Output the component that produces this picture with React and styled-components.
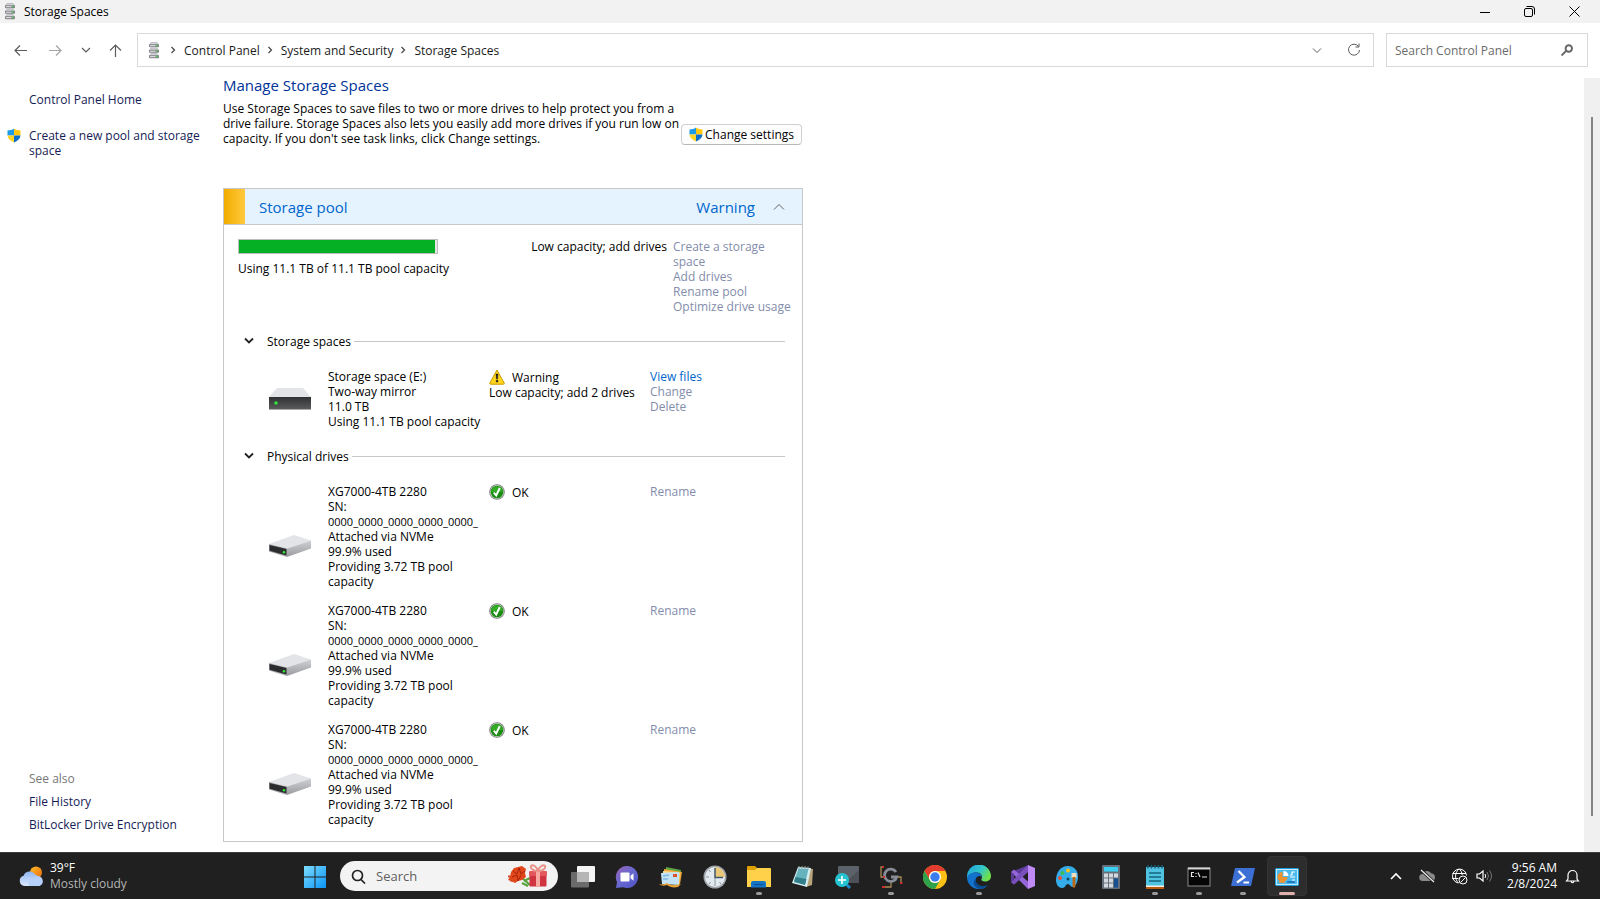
import React, { useState } from 'react';
import styled, { createGlobalStyle, css } from 'styled-components';

const GlobalStyle = createGlobalStyle`
  * {
    box-sizing: border-box;
  }
  body {
    margin: 0;
    background: #fff;
    color: #000;
    font-family: 'Open Sans', 'Noto Sans', sans-serif;
    font-size: 12px;
    line-height: 15px;
  }
  button,
  input {
    font: inherit;
    color: inherit;
  }
  svg {
    display: block;
    flex: none;
  }
`;

const Window = styled.div`
  display: flex;
  flex-direction: column;
  height: 100vh;
  overflow: hidden;
`;

/* title bar */
const TitleBar = styled.header`
  display: flex;
  align-items: center;
  gap: 8px;
  flex: none;
  height: 23px;
  padding-left: 4px;
  background: #f2f2f2;
`;
const WindowTitle = styled.span`
  flex: 1;
`;
const Captions = styled.div`
  display: flex;
  padding-right: 3px;
`;
const CaptionButton = styled.button`
  display: flex;
  align-items: center;
  justify-content: center;
  width: 45px;
  height: 20px;
  padding: 0;
  border: 0;
  background: none;
`;

/* address bar */
const NavBar = styled.nav`
  display: flex;
  align-items: center;
  flex: none;
  padding: 10px 12px 11px 4px;
`;
const NavButton = styled.button`
  display: flex;
  align-items: center;
  justify-content: center;
  width: ${(props) => props.$width || 32}px;
  height: 28px;
  padding: 0;
  border: 0;
  background: none;
  color: ${(props) => (props.$dim ? '#a5a5a5' : '#5c5c5c')};
`;
const AddressBox = styled.div`
  display: flex;
  align-items: center;
  flex: 1;
  height: 34px;
  margin: 0 12px 0 5px;
  padding: 0 1px 0 10px;
  border: 1px solid #d9d9d9;
`;
const Crumbs = styled.ol`
  display: flex;
  align-items: center;
  flex: 1;
  margin: 0;
  padding: 0 0 0 10px;
  list-style: none;
`;
const Crumb = styled.li`
  display: flex;
  align-items: center;
  gap: 8px;
  margin-right: 7px;
  color: #1a1a1a;
`;
const CrumbLink = styled.a`
  color: inherit;
  text-decoration: none;
`;
const SearchBox = styled.label`
  display: flex;
  align-items: center;
  width: 202px;
  height: 34px;
  padding: 0 14px 0 8px;
  border: 1px solid #d9d9d9;
`;
const SearchInput = styled.input`
  flex: 1;
  min-width: 0;
  padding: 0;
  border: 0;
  outline: 0;
  background: none;
  &::placeholder {
    color: #6b6b6b;
    opacity: 1;
  }
`;

/* page */
const Page = styled.div`
  display: flex;
  flex: 1;
  min-height: 0;
`;
const Sidebar = styled.aside`
  display: flex;
  flex-direction: column;
  flex: none;
  width: 223px;
  padding: 14px 20px 20px 7px;
`;
const SideLink = styled.a`
  display: flex;
  gap: 8px;
  margin-bottom: ${(props) => (props.$wide ? 21 : 0)}px;
  padding-left: ${(props) => (props.$icon ? 0 : 22)}px;
  color: #151c55;
  text-decoration: none;
`;
const SeeAlso = styled.div`
  display: flex;
  flex-direction: column;
  gap: 8px;
  margin-top: auto;
`;
const SeeAlsoTitle = styled.span`
  padding-left: 22px;
  color: #777;
`;
const Main = styled.main`
  flex: 1;
  min-width: 0;
`;
const ScrollTrack = styled.div`
  display: flex;
  justify-content: center;
  flex: none;
  width: 16px;
  padding: 39px 0 36px;
  background: #f0f0f0;
`;
const ScrollThumb = styled.div`
  width: 2px;
  background: #858585;
`;
const Content = styled.div`
  max-width: 580px;
`;
const Heading = styled.h1`
  margin: 0 0 9px;
  color: #003399;
  font-size: 15px;
  font-weight: 400;
  line-height: 14px;
`;
const Intro = styled.div`
  display: flex;
  align-items: flex-end;
  justify-content: space-between;
  margin-bottom: 41px;
`;
const IntroText = styled.p`
  flex: 1;
  margin: 0 0 1px;
`;
const SettingsButton = styled.button`
  display: flex;
  align-items: center;
  justify-content: center;
  gap: 2px;
  height: 21px;
  margin: 0 1px 2px 0;
  padding: 0 7px;
  border: 1px solid #d0d0d0;
  border-bottom-color: #b8b8b8;
  border-radius: 4px;
  background: #fdfdfd;
  white-space: nowrap;
`;

/* pool card */
const Pool = styled.section`
  border: 1px solid #c8c8c8;
`;
const PoolHeader = styled.header`
  display: flex;
  align-items: center;
  height: 36px;
  border-bottom: 1px solid #c8c8c8;
  background: #e5f3ff;
  color: #0066cc;
  font-size: 15px;
  line-height: 20px;
`;
const PoolFlag = styled.span`
  align-self: stretch;
  width: 21px;
  margin-right: 14px;
  background: linear-gradient(90deg, #f2ad00, #ffc83d);
`;
const PoolName = styled.h2`
  flex: 1;
  margin: 0;
  font-size: inherit;
  font-weight: 400;
`;
const CollapseButton = styled.button`
  display: flex;
  align-items: center;
  justify-content: center;
  width: 47px;
  height: 30px;
  padding: 0;
  border: 0;
  background: none;
`;
const PoolBody = styled.div`
  padding: 14px 17px 14px 14px;
`;
const Summary = styled.div`
  display: grid;
  grid-template-columns: 200px 1fr 121px;
  column-gap: 6px;
  margin-right: -9px;
`;
const Usage = styled.div`
  white-space: nowrap;
`;
const SummaryStatus = styled.span`
  text-align: right;
`;
const Meter = styled.div`
  height: 15px;
  margin-bottom: 7px;
  border: 1px solid #bcbcbc;
  background: #e6e6e6;
`;
const MeterFill = styled.div`
  width: 99%;
  height: 100%;
  background: #06b025;
`;
const Tasks = styled.div`
  display: flex;
  flex-direction: column;
  align-items: flex-start;
`;
const TaskLink = styled.a`
  color: ${(props) => (props.$off ? '#838dab' : '#0066cc')};
  text-decoration: none;
`;

const GroupHeader = styled.button`
  display: flex;
  align-items: center;
  width: 100%;
  height: 16px;
  margin: 19px 0 20px;
  padding: 0 0 0 6px;
  border: 0;
  background: none;
  &::after {
    content: '';
    flex: 1;
    height: 1px;
    margin-left: 3px;
    background: #c8c8c8;
  }
`;
const GroupName = styled.span`
  margin-left: 13px;
`;
const Items = styled.ul`
  display: flex;
  flex-direction: column;
  gap: 14px;
  margin: 0;
  padding: 0 0 0 31px;
  list-style: none;
`;
const Item = styled.li`
  display: grid;
  grid-template-columns: 59px 161px 161px 1fr;
`;
const ItemIcon = styled.div`
  align-self: center;
  ${(props) =>
    props.$low &&
    css`
      padding-top: 18px;
    `}
`;
const Details = styled.div`
  margin-right: 4px;
`;
const Serial = styled.div`
  font-size: 11px;
`;
const Status = styled.div`
  white-space: nowrap;
`;
const StatusLine = styled.div`
  display: flex;
  align-items: center;
  gap: 7px;
  height: 16px;
`;

/* taskbar */
const Taskbar = styled.footer`
  display: grid;
  grid-template-columns: 1fr auto 1fr;
  align-items: center;
  flex: none;
  height: 47px;
  border-top: 1px solid #3c3c3c;
  background: #202020;
  color: #fff;
  line-height: 16px;
`;
const Weather = styled.button`
  display: flex;
  align-items: center;
  gap: 7px;
  padding: 0 0 0 19px;
  border: 0;
  background: none;
  text-align: left;
`;
const WeatherText = styled.span`
  color: #b4b4b4;
`;
const Temp = styled.span`
  display: block;
  color: #fff;
`;
const Apps = styled.div`
  display: flex;
  align-items: center;
  padding-left: 2px;
`;
const AppButton = styled.button`
  display: flex;
  flex-direction: column;
  align-items: center;
  width: 40px;
  height: 40px;
  margin: 0 2px;
  padding: 8px 0 0;
  border: 1px solid ${(props) => (props.$active ? '#343434' : 'transparent')};
  border-radius: 4px;
  background: ${(props) => (props.$active ? '#2d2d2d' : 'none')};
  &::after {
    content: '';
    width: ${(props) => (props.$active ? 16 : 6)}px;
    height: 3px;
    margin-top: 3px;
    border-radius: 2px;
    background: ${(props) =>
      props.$active ? '#e0b0ad' : props.$running ? '#9a9a9a' : 'transparent'};
  }
`;
const TaskSearch = styled.label`
  display: flex;
  align-items: center;
  width: 218px;
  height: 30px;
  margin: 0 3px;
  padding: 0 10px 0 11px;
  border-radius: 15px;
  background: #f3f3f3;
  font-size: 13px;
`;
const TaskSearchInput = styled(SearchInput)`
  margin-left: 10px;
  &::placeholder {
    color: #5f5f5f;
  }
`;
const Tray = styled.div`
  display: flex;
  align-items: center;
  justify-content: flex-end;
  padding-right: 20px;
`;
const TrayButton = styled.button`
  display: flex;
  align-items: center;
  gap: 8px;
  margin-left: ${(props) => props.$gap}px;
  padding: 0;
  border: 0;
  background: none;
  text-align: right;
`;

/* ---------- icons ---------- */

const Glyph = ({ d, size = 12, width = 1, color = 'currentColor', h }) => (
  <svg
    width={size}
    height={h || size}
    viewBox={`0 0 ${size} ${h || size}`}
    fill="none"
    stroke={color}
    strokeWidth={width}
  >
    <path d={d} />
  </svg>
);

const DisksIcon = () => (
  <svg width="12" height="17" viewBox="0 0 12 17">
    {[0, 5.5, 11].map((y) => (
      <g key={y} transform={`translate(0 ${y})`}>
        <path d="M3 .5h6L10.800 3H1.200z" fill="#d4d5d8" stroke="#97989d" strokeWidth=".5" />
        <rect x="1" y="2.200" width="10" height="3" rx="1" fill="#808187" />
        <rect x="2" y="3.200" width="5.500" height="1" fill="#eceded" />
        <rect x="8" y="2.800" width="1.500" height="1.400" fill="#4fd34a" />
      </g>
    ))}
  </svg>
);

const Shield = () => (
  <svg width="14" height="15" viewBox="0 0 14 15">
    <path d="M7 .5C5 2 3 2.400.5 2.500V7.500H7z" fill="#1c9be8" />
    <path d="M7 .5C9 2 11 2.400 13.500 2.500V7.500H7z" fill="#ffc70f" />
    <path d="M.5 7.500C.9 11 3.500 13.200 7 14.500V7.500z" fill="#ffd52b" />
    <path d="M13.500 7.500C13.100 11 10.500 13.200 7 14.500V7.500z" fill="#0d6fc9" />
  </svg>
);

const SpaceIcon = () => (
  <svg width="42" height="24" viewBox="0 0 42 24">
    <defs>
      <linearGradient id="spaceFront" x1="0" y1="0" x2="0" y2="1">
        <stop offset="0" stopColor="#2f3032" />
        <stop offset="1" stopColor="#5b5c5e" />
      </linearGradient>
    </defs>
    <path d="M8 1h26l8 9H0z" fill="#e3e4e7" />
    <rect y="10" width="42" height="12.500" fill="url(#spaceFront)" />
    <path d="M0 22.500h42" stroke="#a9aaad" />
    <circle cx="7" cy="16" r="1.800" fill="#2fe636" />
  </svg>
);

const DriveIcon = () => (
  <svg width="42" height="24" viewBox="0 0 42 24">
    <defs>
      <linearGradient id="driveSide" x1="0" y1="0" x2="0" y2="1">
        <stop offset="0" stopColor="#cfd0d4" />
        <stop offset="1" stopColor="#9b9ca0" />
      </linearGradient>
    </defs>
    <path d="M0 10 25 1l17 5.500-24 8z" fill="#e3e4e7" />
    <path d="M18 14.500 42 6.500v8L18 23z" fill="url(#driveSide)" />
    <path d="M0 10 18 14.500V23L0 17.500z" fill="#a5a6aa" />
    <path d="M.5 11 17.500 15v6.500L.5 16.800z" fill="#2b2c2e" />
    <circle cx="15" cy="18.300" r="1.300" fill="#2fe636" />
  </svg>
);

const WarningIcon = () => (
  <svg width="16" height="16" viewBox="0 0 16 16">
    <path
      d="M8 1 15.300 14.200Q15.400 15.200 14.500 15.200H1.500Q.6 15.200.7 14.200z"
      fill="#ffd51f"
      stroke="#c79a00"
    />
    <path d="M7 5h2l-.4 5H7.400zM7.200 11.200h1.700v1.800H7.200z" fill="#1a1a1a" stroke="#1a1a1a" strokeWidth=".4" />
  </svg>
);

const OkIcon = () => (
  <svg width="16" height="16" viewBox="0 0 16 16">
    <circle cx="8" cy="8" r="7.800" fill="#777d77" />
    <circle cx="8" cy="8" r="7" fill="#c9d0c9" />
    <circle cx="8" cy="8" r="6.300" fill="#1a8c12" />
    <path d="M2.200 8a5.800 5.800 0 0 1 11.600 0z" fill="#33ab27" />
    <path d="M4.800 8.600 7.200 11.500 10.800 4" fill="none" stroke="#fff" strokeWidth="1.900" />
  </svg>
);

const WeatherIcon = () => (
  <svg width="24" height="21" viewBox="0 0 24 21">
    <defs>
      <linearGradient id="sun" x1="0" y1="0" x2="1" y2="1">
        <stop offset="0" stopColor="#f9bd2b" />
        <stop offset="1" stopColor="#ee6c0c" />
      </linearGradient>
      <linearGradient id="cloud" x1="0" y1="0" x2="0" y2="1">
        <stop offset="0" stopColor="#8fb6f2" />
        <stop offset="1" stopColor="#dbe9ff" />
      </linearGradient>
    </defs>
    <circle cx="17" cy="6.500" r="6" fill="url(#sun)" />
    <path
      d="M5.500 20A5.200 5.200 0 0 1 4.600 9.800 6.300 6.300 0 0 1 16 8.500a5 5 0 0 1 2.500 1.500A5 5 0 0 1 19 20z"
      fill="url(#cloud)"
    />
    <path d="M10 20a5 5 0 0 1 4.500-7 5 5 0 0 1 8.500 1.500A3.800 3.800 0 0 1 20 20z" fill="#b5d0fb" />
  </svg>
);

const GiftIcon = () => (
  <svg width="40" height="24" viewBox="0 0 40 24">
    <path d="M13 13 22 21M16 17l6-3M14 19l6 3" stroke="#59a33c" strokeWidth="2.200" />
    <path d="m3 8 3-4 4-1 4-1 4 3-1 4 1 4-4 3-4 1-3 2-4-2-3-1 2-3z" fill="#e2471c" />
    <path d="m5 7 4 3 2-6 2 6 4-3M4 13l5-2 1 6 3-6" stroke="#a72508" fill="none" />
    <path d="M0 12.500h3M2 16.500h3" stroke="#d94723" strokeWidth="2" />
    <rect x="21.500" y="8" width="17" height="14.500" rx="1" fill="#cf3440" />
    <rect x="21" y="7" width="18" height="5" rx="1" fill="#e2575c" />
    <path d="M28 7h4v15.500h-4z" fill="#f6aaa2" />
    <path d="M30 7C26 7 22 5 23 2c2-2 6 1 7 5 1-4 5-7 7-5 1 3-3 5-7 5z" fill="none" stroke="#e89389" strokeWidth="2" />
  </svg>
);

const App24 = ({ children }) => (
  <svg width="24" height="24" viewBox="0 0 24 24">
    {children}
  </svg>
);

const icons = {
  start: (
    <App24>
      <defs>
        <linearGradient id="win" x1="0" y1="0" x2="1" y2="1">
          <stop offset="0" stopColor="#7ddcff" />
          <stop offset="1" stopColor="#0a94f5" />
        </linearGradient>
      </defs>
      <path d="M1 1h10.500v10.500H1zM12.500 1H23v10.500H12.500zM1 12.500h10.500V23H1zM12.500 12.500H23V23H12.500z" fill="url(#win)" />
    </App24>
  ),
  taskView: (
    <App24>
      <rect x="6" y="1" width="18" height="16" rx="1" fill="#f4f4f4" />
      <rect x="0" y="7" width="18" height="15.500" rx="1" fill="#6b6b6b" />
      <path d="M6 7h12v10H6z" fill="#b5b5b5" />
    </App24>
  ),
  chat: (
    <App24>
      <defs>
        <linearGradient id="chat" x1="0" y1="0" x2="1" y2="1">
          <stop offset="0" stopColor="#9a62b4" />
          <stop offset=".5" stopColor="#6669d2" />
          <stop offset="1" stopColor="#4c4fc0" />
        </linearGradient>
      </defs>
      <path d="M12 1a11 11 0 1 1-4 21.200L1 23l1-6A11 11 0 0 1 12 1z" fill="url(#chat)" />
      <rect x="5.500" y="7.500" width="9" height="9" rx="1" fill="#fff" />
      <path d="m15.500 10.800 3-2.600v7.600l-3-2.600z" fill="#fff" />
    </App24>
  ),
  mail: (
    <App24>
      <path d="m7 2 15 3-2 12-14-3z" fill="#5aa744" />
      <path d="m5 4 18 3-2 12-16-2z" fill="#f0a73c" />
      <path d="m4 6 17 1.500-1 12L4 18z" fill="#f8dd94" />
      <path d="m2 8 18-1v13L3 19z" fill="#c4e3f7" />
      <path d="m4 11 6-1M4 14h5" fill="none" stroke="#7dbbe2" strokeWidth="1.500" />
      <rect x="14" y="9" width="4" height="3" fill="#d9542f" />
      <path d="M0 19c3 1 6 0 8-1 4 3 9 2 14 1l-3 3c-5 1-8 0-11-2-3 1-6 1-8-1z" fill="#e7a33a" />
    </App24>
  ),
  clock: (
    <App24>
      <circle cx="12" cy="12" r="11.500" fill="#9fa4aa" />
      <circle cx="12" cy="12" r="10" fill="#e2e9ef" />
      <path d="M12 12V2a10 10 0 0 1 10 10z" fill="#e8c878" />
      <path d="M12 3v9.500h8" fill="none" stroke="#40566b" strokeWidth="1.500" />
      <path d="M12 13v8M3 12h3M6 5l1.500 2M6 19l1.500-2M18 19l-1.500-2" stroke="#8898a8" />
    </App24>
  ),
  explorer: (
    <App24>
      <path d="M0 2q0-1 1-1h7l2 2v4H0z" fill="#e0a100" />
      <path d="M0 5h8l2-2h13q1 0 1 1v18H0z" fill="#ffd04a" />
      <path d="M4 22.500V18q0-2 2-2h11q2 0 2 2v4.500z" fill="#1573c4" />
      <path d="M7 19h9v1H7z" fill="#0b4d91" />
    </App24>
  ),
  notebook: (
    <App24>
      <path d="m8 3 14 1-1 16-6 2z" fill="#b8a57c" />
      <path d="M7 2 20 3l-4 19L1 18z" fill="#d5eef2" />
      <path d="m7.500 3.500 10 .5-3.500 15L3 16z" fill="#67b3bd" />
      <path d="m4.500 12 11 2-1.500 6-11-3z" fill="#327e8b" />
      <path d="M8 1v3M11 1v3M14 1v3M17 1.500v3" stroke="#9aa" />
    </App24>
  ),
  magnify: (
    <App24>
      <rect x="3" y="1" width="21" height="17" rx="1" fill="#5c6269" />
      <path d="M10 18 24 5v13z" fill="#4c5258" />
      <path d="m11 19 4 4" stroke="#1986c8" strokeWidth="3" />
      <circle cx="7" cy="15" r="7" fill="#25c3d2" />
      <path d="M7 11v8M3 15h8" stroke="#fff" strokeWidth="1.600" />
    </App24>
  ),
  gadget: (
    <App24>
      <path d="M4 2H2v10h3M12 18v4H5M18 12h4v6" fill="none" stroke="#a78a55" strokeWidth="1.300" />
      <path d="M17 7a6.200 6.200 0 1 0 .7 5H12" fill="none" stroke="#878c96" strokeWidth="2.800" />
      <path d="M3 1h2v2H3zM4 11h2v2H4zM3 21h3v2H3zM21 17h2.500v2H21z" fill="#cf2e2e" />
    </App24>
  ),
  chrome: (
    <App24>
      <circle cx="12" cy="12" r="12" fill="#fbc116" />
      <path d="M1.600 6A12 12 0 0 1 22.400 6H12a6 6 0 0 0-5.200 9z" fill="#e33b2e" />
      <path d="M1.600 6A12 12 0 0 0 12 24l5.200-9a6 6 0 0 1-10.400 0z" fill="#2da14c" />
      <circle cx="12" cy="12" r="6" fill="#fff" />
      <circle cx="12" cy="12" r="4.700" fill="#3b7ded" />
    </App24>
  ),
  edge: (
    <App24>
      <defs>
        <linearGradient id="edgeTop" x1="0" y1="0" x2="1" y2=".5">
          <stop offset="0" stopColor="#1f9fe0" />
          <stop offset=".6" stopColor="#33c6c8" />
          <stop offset="1" stopColor="#6ee04a" />
        </linearGradient>
      </defs>
      <path d="M0 12A12 12 0 0 1 24 11c0 4-3 5.500-6 5.500-2.500 0-4-1-3.500-2.500C16 11 14 7.500 9 7.500 4.500 7.500 1 10 0 14z" fill="url(#edgeTop)" />
      <path d="M0 13C.5 9.500 4.500 7.500 8.500 7.500c3 0 6 1.700 6.500 4.500-2-2-6-1-6.500 3C8 20 13 24 20 21A12 12 0 0 1 0 13z" fill="#1373cc" />
      <path d="M8.600 13.500C8 18 12 21.500 17 21c2 0 3.500-1 4.700-2A12 12 0 0 1 13 24C7 23 5 17 8.600 13.500z" fill="#0b4d94" />
    </App24>
  ),
  studio: (
    <App24>
      <path d="M0 7v10l3 2.500L17.500 6V0z" fill="#5c3a97" />
      <path d="m3 9 3.500 3L3 15z" fill="#202020" />
      <path d="m3 4.500 14 12V24L0 7z" fill="#9566d8" />
      <path d="m17 0 7 3v18l-7 3z" fill="#c08bf7" />
      <path d="m0 17 17-17v7L3 19.500z" fill="#7b50bd" />
      <path d="M0 7v10l3-2V9z" fill="#5c3a97" />
    </App24>
  ),
  paint: (
    <App24>
      <path d="M13 1C5 1 1 8 1 15c0 5 3 8 6 8 4 0 3-4 6-4 2 0 2 3 5 3 3-1 5-6 5-10 0-7-4-11-10-11z" fill="#33aeea" />
      <circle cx="13" cy="5.500" r="2" fill="#fbc116" />
      <circle cx="7.500" cy="8" r="2" fill="#3fbf4d" />
      <circle cx="5" cy="13" r="2" fill="#e7502e" />
      <circle cx="13" cy="14" r="1.500" fill="#14485f" />
      <path d="M16.500 8h5v5h-5z" fill="#efdcc0" />
      <path d="M17.500 12h3v9q-1.500 4-3 0z" fill="#b9691a" />
    </App24>
  ),
  calc: (
    <App24>
      <rect x="3" width="18" height="24" rx="1" fill="#66707c" />
      <rect x="5" y="2" width="14" height="4.500" fill="#3bd0f2" />
      <path d="M5 8.500h4v4H5zM10 8.500h4v4h-4zM15 8.500h4v4h-4zM5 13.500h4v4H5zM10 13.500h4v4h-4zM5 18.500h4v4H5zM10 18.500h4v4h-4z" fill="#d3d9df" />
      <path d="M15 13.500h4v9h-4z" fill="#174f93" />
    </App24>
  ),
  notepad: (
    <App24>
      <path d="M3 20h18v4H3z" fill="#b8590c" />
      <path d="M3 20h18v2H3z" fill="#f3f0ea" />
      <path d="M3 2h18v18.500H3z" fill="#50c3e0" />
      <path d="M5 0v3.500M8.500 0v3.500M12 0v3.500M15.500 0v3.500M19 0v3.500" stroke="#155d78" strokeWidth="1.500" />
      <path d="M6 8h12M6 12h12M6 16h12" stroke="#12667f" strokeWidth="1.600" />
    </App24>
  ),
  console: (
    <App24>
      <rect x="1" y="3" width="22" height="18" fill="#050505" stroke="#8d8d8d" />
      <path d="M1 2.500h22v2H1z" fill="#d5d5d5" />
      <path d="M7 7.500H4.500v4H7M9 8v1M9 11v1M11 7.500l2 4.500M15 12h5" fill="none" stroke="#e4e4e4" strokeWidth="1.200" />
    </App24>
  ),
  powershell: (
    <App24>
      <path d="M4 3h20l-4 18H0z" fill="#3c70d4" />
      <path d="m7.500 6 6 6-7.500 5.500M12.500 17.500H18" fill="none" stroke="#fff" strokeWidth="2.200" />
    </App24>
  ),
  control: (
    <App24>
      <rect x=".5" y="3.500" width="23" height="17" rx="1" fill="#c5ecfb" stroke="#1c9fe0" />
      <path d="M2 5h20v14H2z" fill="#4cb9ee" />
      <path d="M7.500 7v5h5a5 5 0 1 1-5-5z" fill="#f0932b" />
      <path d="M8.500 6a5 5 0 0 1 5 5h-5z" fill="#fff" />
      <path d="M15 10h2V7h3M15 12h5M17 15h3" fill="none" stroke="#fff" strokeWidth="1.200" />
      <path d="M4 17h6" stroke="#f0932b" strokeWidth="1.500" />
      <path d="M12 17h8" stroke="#1269b0" strokeWidth="1.500" />
    </App24>
  ),
};

const apps = [
  { name: 'Task view', icon: 'taskView' },
  { name: 'Chat', icon: 'chat' },
  { name: 'Mail', icon: 'mail' },
  { name: 'Clock', icon: 'clock' },
  { name: 'File Explorer', icon: 'explorer', running: true },
  { name: 'Notebook', icon: 'notebook' },
  { name: 'Magnify', icon: 'magnify' },
  { name: 'Gadget', icon: 'gadget', running: true },
  { name: 'Chrome', icon: 'chrome' },
  { name: 'Edge', icon: 'edge', running: true },
  { name: 'Visual Studio', icon: 'studio' },
  { name: 'Paint', icon: 'paint' },
  { name: 'Calculator', icon: 'calc' },
  { name: 'Notepad', icon: 'notepad', running: true },
  { name: 'Command Prompt', icon: 'console', running: true },
  { name: 'PowerShell', icon: 'powershell', running: true },
  { name: 'Control Panel', icon: 'control', active: true },
];

const drives = [1, 2, 3].map((id) => ({
  id,
  model: 'XG7000-4TB 2280',
  serial: '0000_0000_0000_0000_0000_',
  bus: 'Attached via NVMe',
  used: '99.9% used',
  providing: 'Providing 3.72 TB pool capacity',
}));

const crumbs = ['Control Panel', 'System and Security', 'Storage Spaces'];

/* ---------- sections ---------- */

const Group = ({ name, children }) => {
  const [open, setOpen] = useState(true);
  return (
    <div>
      <GroupHeader aria-expanded={open} onClick={() => setOpen(!open)}>
        <Glyph size={10} d="M1 2.500 5 6.500 9 2.500" width={1.8} color="#222" />
        <GroupName>{name}</GroupName>
      </GroupHeader>
      {open && <Items>{children}</Items>}
    </div>
  );
};

const StoragePool = () => (
  <Pool>
    <PoolHeader>
      <PoolFlag />
      <PoolName>Storage pool</PoolName>
      <span>Warning</span>
      <CollapseButton aria-label="Collapse">
        <Glyph size={12} d="M1 8.500 6 3.500 11 8.500" color="#666" />
      </CollapseButton>
    </PoolHeader>
    <PoolBody>
      <Summary>
        <Usage>
          <Meter>
            <MeterFill />
          </Meter>
          Using 11.1 TB of 11.1 TB pool capacity
        </Usage>
        <SummaryStatus>Low capacity; add drives</SummaryStatus>
        <Tasks>
          <TaskLink href="#" $off>Create a storage space</TaskLink>
          <TaskLink href="#" $off>Add drives</TaskLink>
          <TaskLink href="#" $off>Rename pool</TaskLink>
          <TaskLink href="#" $off>Optimize drive usage</TaskLink>
        </Tasks>
      </Summary>

      <Group name="Storage spaces">
        <Item>
          <ItemIcon>
            <SpaceIcon />
          </ItemIcon>
          <Details>
            <div>Storage space (E:)</div>
            <div>Two-way mirror</div>
            <div>11.0 TB</div>
            <div>Using 11.1 TB pool capacity</div>
          </Details>
          <Status>
            <StatusLine>
              <WarningIcon />
              Warning
            </StatusLine>
            Low capacity; add 2 drives
          </Status>
          <Tasks>
            <TaskLink href="#">View files</TaskLink>
            <TaskLink href="#" $off>Change</TaskLink>
            <TaskLink href="#" $off>Delete</TaskLink>
          </Tasks>
        </Item>
      </Group>

      <Group name="Physical drives">
        {drives.map((drive) => (
          <Item key={drive.id}>
            <ItemIcon $low>
              <DriveIcon />
            </ItemIcon>
            <Details>
              <div>{drive.model}</div>
              <div>SN:</div>
              <Serial>{drive.serial}</Serial>
              <div>{drive.bus}</div>
              <div>{drive.used}</div>
              <div>{drive.providing}</div>
            </Details>
            <Status>
              <StatusLine>
                <OkIcon />
                OK
              </StatusLine>
            </Status>
            <Tasks>
              <TaskLink href="#" $off>Rename</TaskLink>
            </Tasks>
          </Item>
        ))}
      </Group>
    </PoolBody>
  </Pool>
);

const App = () => {
  return (
    <Window>
      <GlobalStyle />
      <TitleBar>
        <DisksIcon />
        <WindowTitle>Storage Spaces</WindowTitle>
        <Captions>
          <CaptionButton aria-label="Minimize">
            <Glyph size={10} d="M0 5.500h10" color="#000" />
          </CaptionButton>
          <CaptionButton aria-label="Restore">
            <Glyph size={11} d="M2 2.500h5q1.500 0 1.500 1.500v5q0 1.500-1.500 1.500H2Q.5 10.500.5 9V4Q.5 2.500 2 2.500M2.500.5H8Q10.500.5 10.500 3v5.500" color="#000" />
          </CaptionButton>
          <CaptionButton aria-label="Close">
            <Glyph size={11} d="M.5.5l10 10M10.500.5l-10 10" color="#000" />
          </CaptionButton>
        </Captions>
      </TitleBar>

      <NavBar>
        <NavButton aria-label="Back">
          <Glyph size={13} d="M13 6.500H1M6 1.500l-5 5 5 5" width={1.2} />
        </NavButton>
        <NavButton aria-label="Forward" $width={38} $dim>
          <Glyph size={13} d="M0 6.500h12M7 1.500l5 5-5 5" width={1.2} />
        </NavButton>
        <NavButton aria-label="Recent locations" $width={24}>
          <Glyph size={10} d="M1 3l4 4 4-4" width={1.2} />
        </NavButton>
        <NavButton aria-label="Up" $width={34}>
          <Glyph size={13} d="M6.500 13V1M1 6.500l5.500-5.500L12 6.500" width={1.2} />
        </NavButton>
        <AddressBox>
          <DisksIcon />
          <Crumbs>
            {crumbs.map((crumb) => (
              <Crumb key={crumb}>
                <Glyph size={6} h={8} d="M1.500 1 4.500 4 1.500 7" width={1.2} color="#444" />
                <CrumbLink href="#">{crumb}</CrumbLink>
              </Crumb>
            ))}
          </Crumbs>
          <NavButton aria-label="Previous locations" $width={38}>
            <Glyph size={10} d="M1 3.500l4 4 4-4" />
          </NavButton>
          <NavButton aria-label="Refresh" $width={36}>
            <Glyph size={14} d="M11.500 3.500A5.500 5.500 0 1 0 12.500 7M12 .5v3.500H8.500" />
          </NavButton>
        </AddressBox>
        <SearchBox>
          <SearchInput aria-label="Search Control Panel" placeholder="Search Control Panel" />
          <Glyph size={12} d="M5 7 .5 11.500M11 4.500a3.200 3.200 0 1 1-6.400 0 3.200 3.200 0 0 1 6.400 0z" width={1.9} color="#666" />
        </SearchBox>
      </NavBar>

      <Page>
        <Sidebar>
          <SideLink href="#" $wide>Control Panel Home</SideLink>
          <SideLink href="#" $icon>
            <Shield />
            Create a new pool and storage space
          </SideLink>
          <SeeAlso>
            <SeeAlsoTitle>See also</SeeAlsoTitle>
            <SideLink href="#">File History</SideLink>
            <SideLink href="#">BitLocker Drive Encryption</SideLink>
          </SeeAlso>
        </Sidebar>
        <Main>
          <Content>
            <Heading>Manage Storage Spaces</Heading>
            <Intro>
              <IntroText>
                Use Storage Spaces to save files to two or more drives to help protect you from a
                drive failure. Storage Spaces also lets you easily add more drives if you run low on
                capacity. If you don't see task links, click Change settings.
              </IntroText>
              <SettingsButton>
                <Shield />
                Change settings
              </SettingsButton>
            </Intro>
            <StoragePool />
          </Content>
        </Main>
        <ScrollTrack>
          <ScrollThumb />
        </ScrollTrack>
      </Page>

      <Taskbar>
        <Weather>
          <WeatherIcon />
          <WeatherText>
            <Temp>39°F</Temp>
            Mostly cloudy
          </WeatherText>
        </Weather>
        <Apps>
          <AppButton aria-label="Start">{icons.start}</AppButton>
          <TaskSearch>
            <Glyph size={15} d="M11.500 6.500a5 5 0 1 1-10 0 5 5 0 0 1 10 0zM10 10.500l4 4" width={1.7} color="#222" />
            <TaskSearchInput aria-label="Search" placeholder="Search" />
            <GiftIcon />
          </TaskSearch>
          {apps.map((app) => (
            <AppButton key={app.icon} aria-label={app.name} $running={app.running} $active={app.active}>
              {icons[app.icon]}
            </AppButton>
          ))}
        </Apps>
        <Tray>
          <TrayButton aria-label="Show hidden icons">
            <Glyph size={12} d="M1 9l5-5 5 5" width={1.6} />
          </TrayButton>
          <TrayButton aria-label="OneDrive" $gap={17}>
            <svg width="17" height="14" viewBox="0 0 17 14">
              <path d="M4 12a3.500 3.500 0 0 1-.5-7 5 5 0 0 1 9-.5A3.800 3.800 0 0 1 13 12z" fill="#8a8a8a" />
              <path d="m2 1 13 12" stroke="#202020" strokeWidth="3" />
              <path d="m2 1 13 12" stroke="#eee" strokeWidth="1.200" />
            </svg>
          </TrayButton>
          <TrayButton aria-label="Network and volume" $gap={15}>
            <svg width="17" height="17" viewBox="0 0 17 17" fill="none" stroke="#fff">
              <path d="M15.500 7.500A7 7 0 1 0 7.500 15M1.500 5.500h13.500M1 10.500h6.500M8 1C3.500 5 3.500 11 7.500 15M8.500 1q2.500 2.500 2.700 6" />
              <circle cx="12" cy="12" r="4" />
              <path d="m9.500 14.500 5-5" />
            </svg>
            <svg width="17" height="14" viewBox="0 0 17 14" fill="none" stroke="#fff">
              <path d="M1 5h2.500L7 2v10L3.500 9H1z" strokeWidth="1.200" />
              <path d="M9 5q1.500 2 0 4" />
              <path d="M11 3q3 4 0 8M13.500 1.500q4 5.500 0 11" stroke="#777" />
            </svg>
          </TrayButton>
          <TrayButton $gap={14}>
            <span>
              9:56 AM
              <br />
              2/8/2024
            </span>
            <Glyph size={15} d="M7.500 1.500A4.500 4.500 0 0 0 3 6v4L1.500 12h12L12 10V6a4.500 4.500 0 0 0-4.500-4.500zM6 12.500q1.500 2.500 3 0" width={1.2} />
          </TrayButton>
        </Tray>
      </Taskbar>
    </Window>
  );
};

export default App;
